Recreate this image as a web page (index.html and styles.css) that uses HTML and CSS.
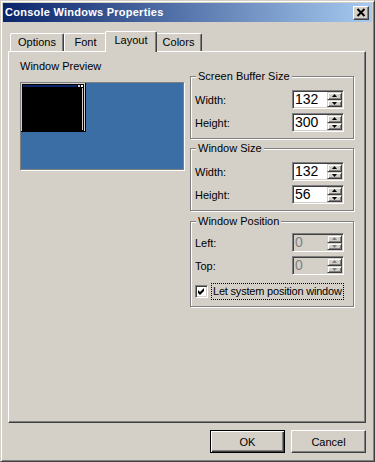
FILE: index.html
```html
<!DOCTYPE html>
<html>
<head>
<meta charset="utf-8">
<title>Console Windows Properties</title>
<link rel="stylesheet" href="styles.css">
</head>
<body>
<div class="window">
  <div class="titlebar">
    <span class="title">Console Windows Properties</span>
    <span class="close">
      <svg width="10" height="9" viewBox="0 0 10 9"><path d="M1.5 1 L8.5 8 M8.5 1 L1.5 8" stroke="#000" stroke-width="2" fill="none"/></svg>
    </span>
  </div>
  <div class="body">
    <div class="tabs">
      <div class="tab t-options">Options</div>
      <div class="tab t-font">Font</div>
      <div class="tab t-layout active">Layout</div>
      <div class="tab t-colors">Colors</div>
    </div>
    <div class="panel">
      <div class="left">
        <div class="label">Window Preview</div>
        <div class="preview">
          <svg class="mini" width="65" height="49" viewBox="0 0 65 49">
            <rect x="0" y="0" width="65" height="49" fill="#000"/>
            <rect x="0" y="0" width="64" height="1" fill="#d4d0c8"/>
            <rect x="0" y="0" width="1" height="48" fill="#d4d0c8"/>
            <rect x="63" y="0" width="1" height="48" fill="#d4d0c8"/>
            <rect x="2" y="2" width="54" height="2" fill="#0a246a"/>
            <rect x="57" y="2" width="2" height="2" fill="#d4d0c8"/>
            <rect x="60" y="2" width="2" height="2" fill="#fff"/>
            <rect x="61" y="5" width="1" height="42" fill="#d4d0c8"/>
          </svg>
        </div>
      </div>
      <div class="right">
        <fieldset class="group g1">
          <legend>Screen Buffer Size</legend>
          <div class="row">
            <span>Width:</span>
            <span class="spin"><span class="val">132</span><span class="arrows"><span class="ab up"><svg width="5" height="3" viewBox="0 0 5 3"><path d="M2.5 0 L5 3 L0 3 Z" fill="#000"/></svg></span><span class="ab dn"><svg width="5" height="3" viewBox="0 0 5 3"><path d="M0 0 L5 0 L2.5 3 Z" fill="#000"/></svg></span></span></span>
          </div>
          <div class="row">
            <span>Height:</span>
            <span class="spin"><span class="val">300</span><span class="arrows"><span class="ab up"><svg width="5" height="3" viewBox="0 0 5 3"><path d="M2.5 0 L5 3 L0 3 Z" fill="#000"/></svg></span><span class="ab dn"><svg width="5" height="3" viewBox="0 0 5 3"><path d="M0 0 L5 0 L2.5 3 Z" fill="#000"/></svg></span></span></span>
          </div>
        </fieldset>
        <fieldset class="group g2">
          <legend>Window Size</legend>
          <div class="row">
            <span>Width:</span>
            <span class="spin"><span class="val">132</span><span class="arrows"><span class="ab up"><svg width="5" height="3" viewBox="0 0 5 3"><path d="M2.5 0 L5 3 L0 3 Z" fill="#000"/></svg></span><span class="ab dn"><svg width="5" height="3" viewBox="0 0 5 3"><path d="M0 0 L5 0 L2.5 3 Z" fill="#000"/></svg></span></span></span>
          </div>
          <div class="row">
            <span>Height:</span>
            <span class="spin"><span class="val">56</span><span class="arrows"><span class="ab up"><svg width="5" height="3" viewBox="0 0 5 3"><path d="M2.5 0 L5 3 L0 3 Z" fill="#000"/></svg></span><span class="ab dn"><svg width="5" height="3" viewBox="0 0 5 3"><path d="M0 0 L5 0 L2.5 3 Z" fill="#000"/></svg></span></span></span>
          </div>
        </fieldset>
        <fieldset class="group g3">
          <legend>Window Position</legend>
          <div class="row">
            <span>Left:</span>
            <span class="spin disabled"><span class="val">0</span><span class="arrows"><span class="ab up"><svg width="5" height="3" viewBox="0 0 5 3"><path d="M2.5 0 L5 3 L0 3 Z" fill="#808080"/></svg></span><span class="ab dn"><svg width="5" height="3" viewBox="0 0 5 3"><path d="M0 0 L5 0 L2.5 3 Z" fill="#808080"/></svg></span></span></span>
          </div>
          <div class="row">
            <span>Top:</span>
            <span class="spin disabled"><span class="val">0</span><span class="arrows"><span class="ab up"><svg width="5" height="3" viewBox="0 0 5 3"><path d="M2.5 0 L5 3 L0 3 Z" fill="#808080"/></svg></span><span class="ab dn"><svg width="5" height="3" viewBox="0 0 5 3"><path d="M0 0 L5 0 L2.5 3 Z" fill="#808080"/></svg></span></span></span>
          </div>
          <div class="check-row">
            <span class="checkbox"><svg width="9" height="9" viewBox="0 0 9 9"><path d="M1 3 L3 5 L7 1 L7 4 L3 8 L1 6 Z" fill="#000"/></svg></span>
            <span class="check-label">Let system position window</span>
          </div>
        </fieldset>
      </div>
    </div>
    <div class="buttons">
      <button class="btn default">OK</button>
      <button class="btn">Cancel</button>
    </div>
  </div>
</div>
</body>
</html>
```
FILE: styles.css
```css
* { box-sizing: border-box; }
html, body { margin: 0; padding: 0; }
body {
  width: 375px;
  height: 462px;
  overflow: hidden;
  background: #d4d0c8;
  font-family: "Liberation Sans", Arial, sans-serif;
  font-size: 11px;
  color: #000;
}
.window {
  width: 375px;
  height: 462px;
  background: #d4d0c8;
  border: 1px solid;
  border-color: #d4d0c8 #404040 #404040 #d4d0c8;
  box-shadow: inset 1px 1px #fff, inset -1px -1px #808080;
  padding: 2px;
  display: flex;
  flex-direction: column;
}
.titlebar {
  height: 19px;
  flex: none;
  display: flex;
  align-items: center;
  padding: 0 3px 0 2px;
  background: linear-gradient(to right, #0a246a, #a6caf0);
}
.title {
  color: #fff;
  font-weight: bold;
  font-size: 11px;
  letter-spacing: 0.25px;
  line-height: 13px;
}
.close {
  margin-left: auto;
  width: 16px;
  height: 14px;
  background: #d4d0c8;
  border: 1px solid;
  border-color: #fff #404040 #404040 #fff;
  box-shadow: inset -1px -1px #808080;
  display: flex;
  align-items: center;
  justify-content: center;
}
.close svg { display: block; margin-left: -1px; }
.body {
  flex: 1;
  padding: 0 6px 0 5px;
  display: flex;
  flex-direction: column;
}
.tabs {
  margin-top: 9px;
  height: 20px;
  display: flex;
  align-items: flex-end;
  padding-left: 2px;
  position: relative;
  z-index: 2;
}
.tab {
  height: 18px;
  border-top: 1px solid #fff;
  border-left: 1px solid #fff;
  border-right: 1px solid #404040;
  box-shadow: inset -1px 0 #808080;
  border-radius: 2px 2px 0 0;
  background: #d4d0c8;
  text-align: center;
  line-height: 16px;
}
.t-options { width: 54px; }
.t-font { width: 43px; }
.t-layout { width: 48px; }
.t-colors { width: 47px; }
.tab.active {
  width: 52px;
  height: 21px;
  margin: 0 -2px -1px -2px;
  position: relative;
  z-index: 3;
  line-height: 17px;
}
.panel {
  height: 372px;
  border: 1px solid;
  border-color: #fff #404040 #404040 #fff;
  box-shadow: inset -1px -1px #808080;
  padding: 8px 10px 0 11px;
  display: flex;
  gap: 6px;
}
.left { width: 164px; }
.label { line-height: 13px; }
.preview {
  margin-top: 9px;
  width: 164px;
  height: 88px;
  background: #3a6ea5;
  border: 1px solid #808080;
  box-shadow: 1px 1px #fff;
}
.mini { display: block; }
.right { width: 164px; padding-top: 10px; }
.group {
  margin: 0;
  min-width: 0;
  width: 164px;
  border: 1px solid #808080;
  box-shadow: inset 1px 1px #fff, 1px 1px #fff;
  padding: 8px 9px 6px 4px;
}
.group legend {
  padding: 0 2px;
  margin-left: 1px;
  line-height: 12px;
  background: #d4d0c8;
}
.g2 { margin-top: 3px; }
.g3 { margin-top: 4px; padding-top: 6px; padding-bottom: 6px; }
.row {
  height: 19px;
  display: flex;
  align-items: center;
  justify-content: space-between;
}
.row + .row { margin-top: 4px; }
.spin {
  width: 52px;
  height: 19px;
  display: flex;
  border: 1px solid;
  border-color: #808080 #fff #fff #808080;
  box-shadow: inset 1px 1px #404040, inset -1px -1px #d4d0c8;
  background: #fff;
  padding: 1px;
}
.val {
  flex: 1;
  font-size: 14px;
  line-height: 15px;
  padding-left: 1px;
}
.spin.disabled { background: #d4d0c8; }
.spin.disabled .val { color: #808080; }
.arrows {
  width: 15px;
  display: flex;
  flex-direction: column;
}
.ab {
  flex: 1;
  background: #d4d0c8;
  border: 1px solid;
  border-color: #d4d0c8 #404040 #404040 #d4d0c8;
  box-shadow: inset 1px 1px #fff, inset -1px -1px #808080;
  display: flex;
  align-items: center;
  justify-content: center;
}
.ab svg { display: block; }
.check-row {
  margin-top: 8px;
  height: 17px;
  display: flex;
  align-items: center;
  white-space: nowrap;
}
.checkbox {
  flex: none;
  width: 13px;
  height: 13px;
  border: 1px solid;
  border-color: #808080 #fff #fff #808080;
  box-shadow: inset 1px 1px #404040, inset -1px -1px #d4d0c8;
  background: #fff;
  padding: 1px;
  display: flex;
  align-items: center;
  justify-content: center;
}
.checkbox svg { display: block; }
.check-label {
  flex: none;
  margin-left: 3px;
  height: 17px;
  line-height: 15px;
  padding: 0 1px 0 1px;
  border: 1px dotted #000;
  white-space: nowrap;
  letter-spacing: -0.2px;
}
.buttons {
  margin-top: 7px;
  display: flex;
  justify-content: flex-end;
  gap: 6px;
}
.btn {
  width: 75px;
  height: 23px;
  padding: 0;
  margin: 0;
  font-family: inherit;
  font-size: 11px;
  color: #000;
  background: #d4d0c8;
  border: 1px solid;
  border-color: #fff #404040 #404040 #fff;
  box-shadow: inset -1px -1px #808080;
}
.btn.default {
  border-color: #000;
  box-shadow: inset 1px 1px #fff, inset -1px -1px #404040, inset -2px -2px #808080;
}
```
